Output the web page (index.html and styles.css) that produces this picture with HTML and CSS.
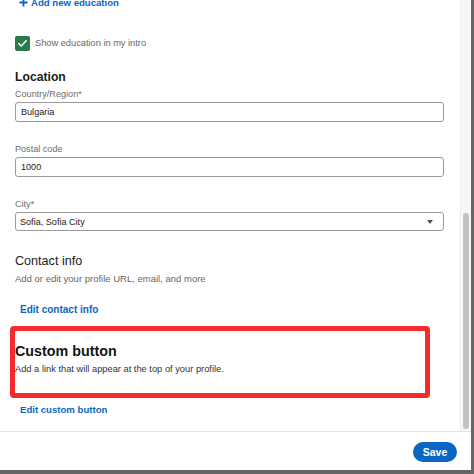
FILE: index.html
```html
<!DOCTYPE html>
<html lang="en">
<head>
<meta charset="utf-8">
<title>Edit intro</title>
<link rel="stylesheet" href="styles.css">
</head>
<body>
<div class="modal">
  <div class="scroll-area">
    <div class="content">
      <a class="add-link" href="#">
        <svg class="plus" width="9" height="9" viewBox="0 0 9 9"><path d="M4.5 0.5v8M0.5 4.5h8" stroke="#0a66c2" stroke-width="1.8" fill="none"/></svg>
        <span>Add new education</span>
      </a>
      <label class="check-row">
        <span class="checkbox">
          <svg width="11" height="11" viewBox="0 0 11 11"><path d="M1.8 5.6l2.4 2.4 5-5.2" stroke="#fff" stroke-width="1.5" fill="none" stroke-linecap="round" stroke-linejoin="round"/></svg>
        </span>
        <span class="check-text">Show education in my intro</span>
      </label>

      <h2 class="section-title">Location</h2>
      <div class="field-label first">Country/Region*</div>
      <div class="input">Bulgaria</div>
      <div class="field-label">Postal code</div>
      <div class="input">1000</div>
      <div class="field-label">City*</div>
      <div class="input select">
        <span>Sofia, Sofia City</span>
        <span class="caret"></span>
      </div>

      <h2 class="contact-title">Contact info</h2>
      <p class="sub">Add or edit your profile URL, email, and more</p>
      <a class="edit-link" href="#">Edit contact info</a>

      <div class="highlight">
        <h2 class="custom-title">Custom button</h2>
        <p class="sub small">Add a link that will appear at the top of your profile.</p>
      </div>
      <a class="edit-link second" href="#">Edit custom button</a>
    </div>
    <div class="scrollbar"><div class="thumb"></div></div>
  </div>
  <div class="footer">
    <button class="save">Save</button>
  </div>
</div>
</body>
</html>
```

FILE: styles.css
```css
* { box-sizing: border-box; }
html, body {
  margin: 0;
  padding: 0;
  background: #666666;
  width: 474px;
  height: 474px;
  overflow: hidden;
  font-family: "Liberation Sans", Arial, sans-serif;
}
.modal {
  width: 471px;
  height: 470px;
  background: #ffffff;
  display: flex;
  flex-direction: column;
}
.scroll-area {
  height: 431px;
  display: flex;
  overflow: hidden;
}
.content {
  flex: 1;
  padding: 0 16px 0 15px;
  display: flex;
  flex-direction: column;
  align-items: flex-start;
}
.scrollbar {
  width: 11px;
  background: #f7f7f7;
  border-left: 1px solid #ececec;
  padding-left: 2px;
}
.thumb {
  width: 6px;
  height: 216px;
  margin-top: 213px;
  background: #c3c3c3;
  border-radius: 3px;
}
.add-link {
  margin-top: -4.5px;
  margin-left: 4px;
  height: 14px;
  display: flex;
  align-items: center;
  gap: 3px;
  color: #0a66c2;
  font-weight: bold;
  font-size: 9.6px;
  text-decoration: none;
}
.plus { display: block; }
.check-row {
  margin-top: 25.5px;
  height: 16px;
  display: flex;
  align-items: center;
  gap: 5px;
}
.checkbox {
  width: 15px;
  height: 15px;
  border-radius: 2px;
  background: #2b7a4b;
  display: flex;
  align-items: center;
  justify-content: center;
}
.checkbox svg { display: block; }
.check-text {
  font-size: 9.25px;
  color: #666666;
}
h2, p { margin: 0; font-weight: normal; }
.section-title {
  margin-top: 16.7px;
  font-size: 12.2px;
  line-height: 18px;
  font-weight: bold;
  color: #1c1c1c;
}
.field-label {
  margin-top: 20.5px;
  font-size: 9.1px;
  line-height: 12px;
  color: #6e6e6e;
}
.field-label.first { margin-top: 2.3px; }
.input {
  margin-top: 2.5px;
  width: 100%;
  height: 20px;
  border: 1px solid #9a9a9a;
  border-radius: 3px;
  padding: 0 5px;
  font-size: 9.1px;
  color: #222222;
  display: flex;
  align-items: center;
}
.input.select {
  height: 19px;
  padding: 0 10px 0 4px;
  justify-content: space-between;
}
.caret {
  width: 0;
  height: 0;
  border-left: 3.5px solid transparent;
  border-right: 3.5px solid transparent;
  border-top: 4px solid #555555;
}
.contact-title {
  margin-top: 20.5px;
  font-size: 12.6px;
  line-height: 18px;
  color: #222222;
}
.sub {
  margin-top: 3.2px;
  font-size: 9.5px;
  line-height: 12px;
  color: #666666;
}
.sub.small {
  margin-top: 3.5px;
  font-size: 9.3px;
  color: #333333;
}
.edit-link {
  margin-top: 18.3px;
  margin-left: 5px;
  font-size: 10px;
  line-height: 14px;
  font-weight: bold;
  color: #0a66c2;
  text-decoration: none;
}
.edit-link.second {
  margin-top: 5px;
  font-size: 9.6px;
}
.highlight {
  margin-top: 9px;
  margin-left: -5px;
  width: 420px;
  border: 5px solid #f52a2a;
  border-radius: 4px;
  padding: 10.5px 0 18px 0;
}
.custom-title {
  font-size: 14.3px;
  line-height: 18px;
  font-weight: bold;
  color: #141414;
}
.footer {
  flex: 1;
  border-top: 1px solid #e4e4e4;
  display: flex;
  justify-content: flex-end;
  align-items: flex-start;
  padding: 10px 14px 0 0;
}
.save {
  width: 44px;
  height: 20px;
  border: none;
  border-radius: 10px;
  background: #0a66c2;
  color: #ffffff;
  font-family: "Liberation Sans", Arial, sans-serif;
  font-size: 10.5px;
  font-weight: bold;
  padding: 0;
}
```
